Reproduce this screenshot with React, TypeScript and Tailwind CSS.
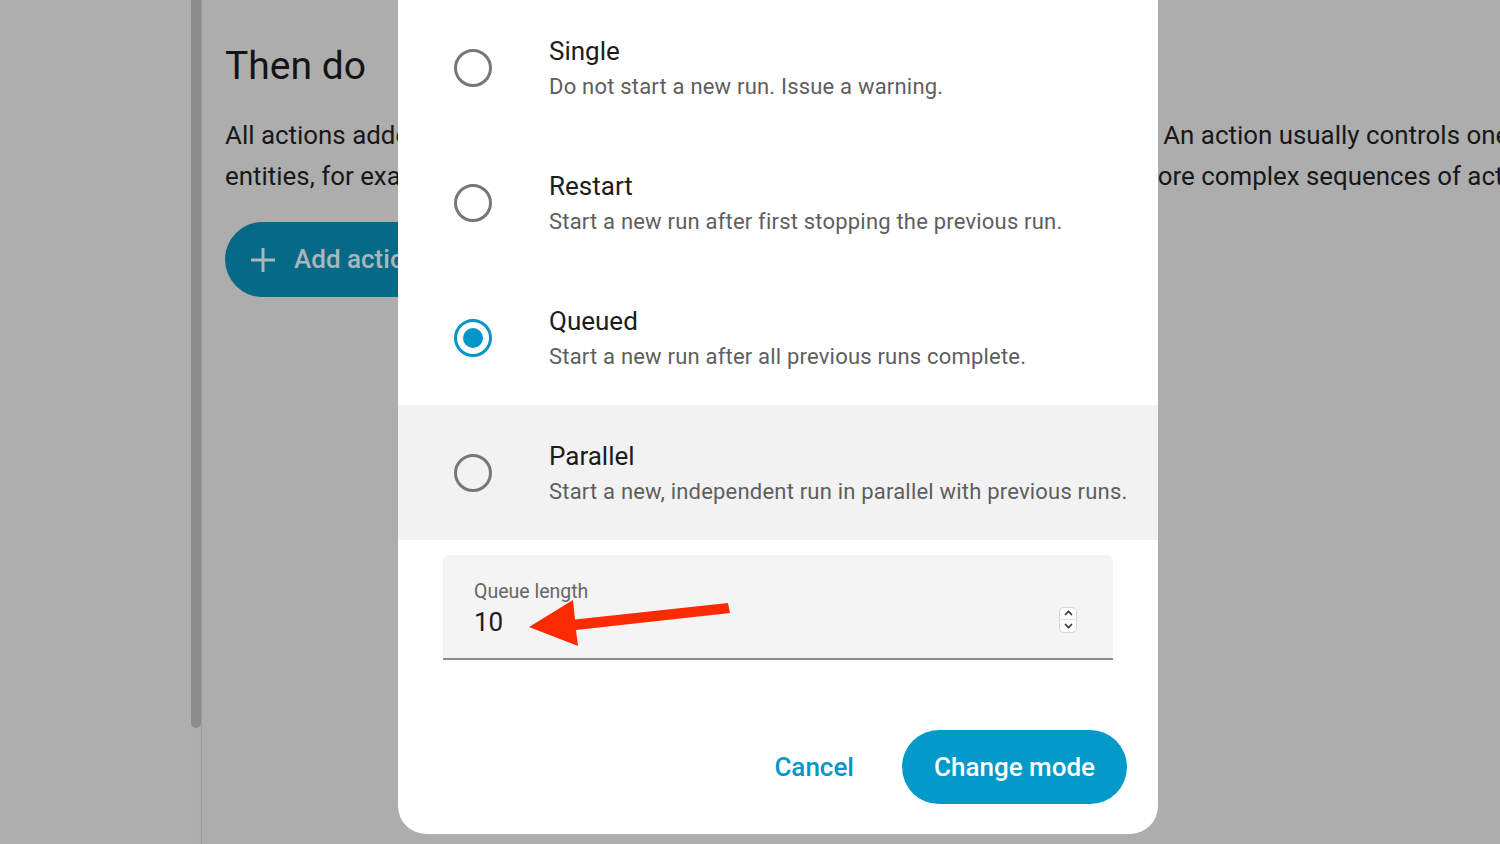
import { useState } from 'react'

type Mode = {
  id: string
  title: string
  description: string
}

const MODES: Mode[] = [
  { id: 'single', title: 'Single', description: 'Do not start a new run. Issue a warning.' },
  { id: 'restart', title: 'Restart', description: 'Start a new run after first stopping the previous run.' },
  { id: 'queued', title: 'Queued', description: 'Start a new run after all previous runs complete.' },
  { id: 'parallel', title: 'Parallel', description: 'Start a new, independent run in parallel with previous runs.' },
]

function Radio({ checked }: { checked: boolean }) {
  return (
    <span
      className={`flex h-[38px] w-[38px] shrink-0 items-center justify-center rounded-full border-[3px] ${
        checked ? 'border-[#0396c6]' : 'border-[#777777]'
      }`}
    >
      {checked && <span className="h-[20px] w-[20px] rounded-full bg-[#0396c6]" />}
    </span>
  )
}

function NumberSpinner() {
  return (
    <div className="mt-[26px] flex h-[26px] w-[18px] flex-col overflow-hidden rounded-[5px] border border-[#d6d6d6] bg-white">
      <div className="flex flex-1 items-center justify-center border-b border-[#e2e2e2]">
        <svg width="9" height="6" viewBox="0 0 9 6">
          <path d="M1 5 L4.5 1.5 L8 5" fill="none" stroke="#333" strokeWidth="1.6" />
        </svg>
      </div>
      <div className="flex flex-1 items-center justify-center">
        <svg width="9" height="6" viewBox="0 0 9 6">
          <path d="M1 1 L4.5 4.5 L8 1" fill="none" stroke="#333" strokeWidth="1.6" />
        </svg>
      </div>
    </div>
  )
}

function ModeDialog() {
  const [mode, setMode] = useState('queued')
  const hovered = 'parallel'

  return (
    <div className="absolute left-[398px] top-0 flex h-[834px] w-[760px] flex-col rounded-b-[28px] bg-white">
      <div className="flex flex-col">
        {MODES.map((m) => (
          <label
            key={m.id}
            onClick={() => setMode(m.id)}
            className={`flex h-[135px] cursor-pointer items-center pl-[56px] ${
              m.id === hovered ? 'bg-[#f2f2f2]' : ''
            }`}
          >
            <Radio checked={mode === m.id} />
            <div className="ml-[57px] flex flex-col pt-[2px]">
              <span className="text-[26px] leading-[35px] text-[#1c1c1c]">{m.title}</span>
              <span className="text-[22px] leading-[35px] tracking-[0.2px] text-[#5e5e5e]">
                {m.description}
              </span>
            </div>
          </label>
        ))}
      </div>

      <div className="mx-[45px] mt-[15px] flex h-[105px] items-center rounded-t-[6px] border-b-2 border-[#8a8a8a] bg-[#f4f4f4] pl-[31px] pr-[36px]">
        <div className="flex flex-1 flex-col pt-[4px]">
          <span className="text-[19.5px] leading-[26px] text-[#666666]">Queue length</span>
          <span className="text-[26px] leading-[34px] text-[#1c1c1c]">10</span>
        </div>
        <NumberSpinner />
      </div>

      <div className="mt-auto mb-[30px] mr-[31px] flex items-center justify-end gap-[28px]">
        <button className="px-[20px] text-[26px] font-medium text-[#0396c6]">Cancel</button>
        <button className="h-[74px] rounded-full bg-[#0399c8] px-[32px] text-[26px] font-medium text-white">
          Change mode
        </button>
      </div>
    </div>
  )
}

export default function App() {
  return (
    <div
      className="relative flex h-[844px] w-[1500px] overflow-hidden bg-[#adadad]"
      style={{ fontFamily: 'Roboto, "Noto Sans", sans-serif' }}
    >
      {/* sidebar area, scrollbar and divider */}
      <div className="w-[191px] shrink-0 bg-[#afafaf]" />
      <div className="w-[10px] shrink-0">
        <div className="h-[728px] rounded-b-full bg-[#8c8c8c]" />
      </div>
      <div className="w-px shrink-0 bg-[#9b9b9b]" />

      {/* page content behind the scrim */}
      <div className="flex min-w-0 flex-1 flex-col pl-[23px] pt-[40px]">
        <h2 className="text-[39px] leading-[52px] text-[#141414]">Then do</h2>
        <div className="mt-[23px] text-[25.9px] leading-[41px] text-[#181818]">
          <p className="whitespace-nowrap">
            All actions added here will be executed in order when the automation is triggered. An action usually controls one of the areas, devices, or entities
          </p>
          <p className="whitespace-nowrap">
            entities, for example switch on the lights. You can use building blocks to create more complex sequences of actions.
          </p>
        </div>
        <button className="mt-[25px] flex h-[75px] w-[260px] items-center gap-[17px] rounded-full bg-[#066a87] pl-[24px] text-[26px] font-medium text-[#aab6bb]">
          <svg width="28" height="28" viewBox="0 0 28 28">
            <path d="M14 2 V26 M2 14 H26" stroke="#aab6bb" strokeWidth="3" />
          </svg>
          Add action
        </button>
      </div>

      <ModeDialog />

      {/* red annotation arrow pointing at the queue length */}
      <svg
        className="pointer-events-none absolute left-[520px] top-[590px]"
        width="220"
        height="65"
        viewBox="520 590 220 65"
      >
        <polygon
          points="529,627 573,600 575,619.5 728,603 730,613 576,630 578,646"
          fill="#fb2a02"
        />
      </svg>
    </div>
  )
}
